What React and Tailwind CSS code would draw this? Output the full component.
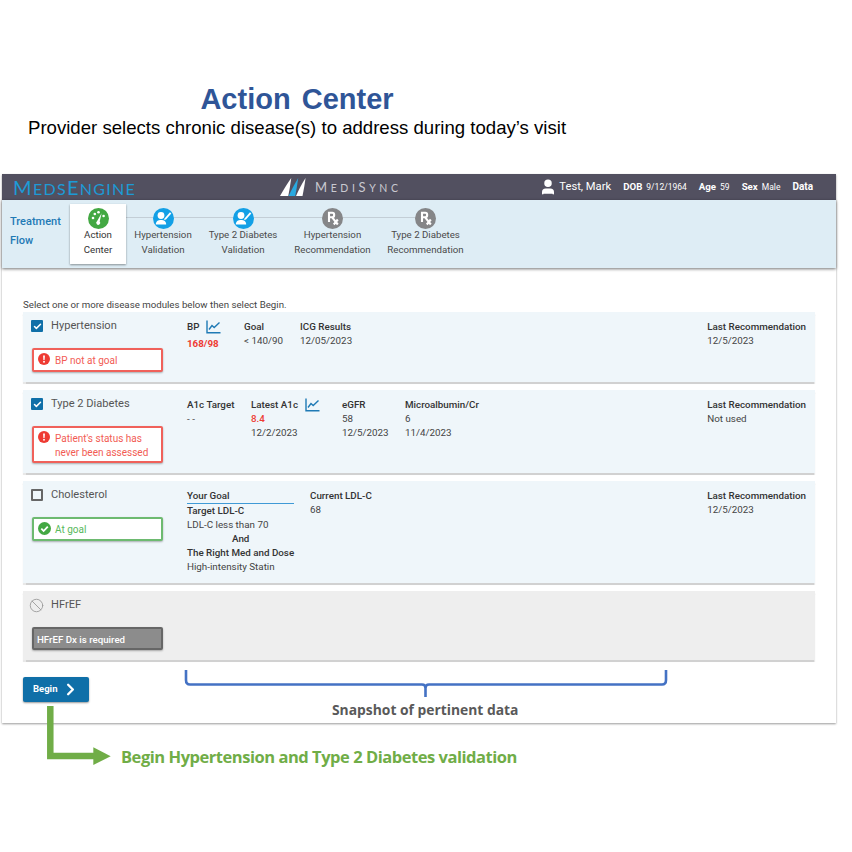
import React from 'react';
import { Check, ChevronRight, Ban, User } from 'lucide-react';

const roboto = 'font-["Roboto",sans-serif]';

const TrendIcon = () => (
  <svg width="15" height="14" viewBox="0 0 15 14" fill="none" stroke="#1f7ab5" strokeWidth="1.4" className="shrink-0">
    <path d="M1 0.5V12.800H14.500" />
    <path d="M3 9.500L6 5.500L8.200 7.500L13.500 2.500" />
  </svg>
);

const GaugeIcon = () => (
  <svg width="21" height="21" viewBox="0 0 21 21">
    <circle cx="10.500" cy="10.500" r="10.500" fill="#43a843" />
    <circle cx="5" cy="10" r="1.300" fill="#fff" />
    <circle cx="6.800" cy="6" r="1.300" fill="#fff" />
    <circle cx="10.500" cy="4.300" r="1.300" fill="#fff" />
    <circle cx="15.600" cy="8" r="1.300" fill="#fff" />
    <path d="M13.600 5.200L11.700 13.400A2 2 0 1 1 9 13.200Z" fill="#fff" />
  </svg>
);

const ValidationIcon = () => (
  <svg width="21" height="21" viewBox="0 0 21 21">
    <circle cx="10.500" cy="10.500" r="10.500" fill="#13a0e6" />
    <circle cx="8" cy="7.500" r="3.400" fill="#fff" />
    <path d="M2.800 16.500C2.800 13.400 5 12 8 12C11 12 13.200 13.400 13.200 16.500Z" fill="#fff" />
    <path d="M11.500 10.500L17 4.300L18.300 5.500L13 11.500L11 12Z" fill="#fff" />
  </svg>
);

const RxIcon = () => (
  <svg width="21" height="21" viewBox="0 0 21 21">
    <circle cx="10.500" cy="10.500" r="10.500" fill="#858688" />
    <path d="M7 14V4.800H10.300C12.800 4.800 12.800 9.200 10.300 9.200H7M10 9.200L15.800 16.500M15.800 11.500L11.800 16.500" fill="none" stroke="#fff" strokeWidth="2.100" />
  </svg>
);

const AlertIcon = () => (
  <svg width="12" height="12" viewBox="0 0 12 12" className="ml-[4px] mr-[5px] -mt-[1px] shrink-0">
    <circle cx="6" cy="6" r="6" fill="#ee3b33" />
    <path d="M5.100 2.400H6.900L6.600 7H5.400Z" fill="#fff" />
    <circle cx="6" cy="8.800" r="0.950" fill="#fff" />
  </svg>
);

const OkIcon = () => (
  <svg width="13" height="13" viewBox="0 0 13 13" className="ml-[4px] mr-[4px] -mt-[1px] shrink-0">
    <circle cx="6.500" cy="6.500" r="6.500" fill="#43a843" />
    <path d="M3.300 6.700L5.600 9L9.800 4.600" fill="none" stroke="#fff" strokeWidth="1.800" />
  </svg>
);

const Logo = () => (
  <svg width="26" height="18" viewBox="0 0 30 18" preserveAspectRatio="none" className="shrink-0">
    <path d="M0 18C4 12 8 6 13 0C12 6 11 12 9.500 18Z" fill="#fff" />
    <path d="M10 18C13 12 17 6 21 0C20 6 19 12 17.500 18Z" fill="#29a9e0" />
    <path d="M18.500 18C21.500 12 25 6 29.500 0C28.500 6 27.500 12 26 18Z" fill="#fff" />
  </svg>
);

const Step = ({ icon, lines, width, active }) => (
  <div className={`relative flex flex-col items-center pt-[4px] h-[60px] ${width} ${active ? 'bg-white shadow-[0_1px_2px_rgba(0,0,0,0.4)] text-[#333]' : 'text-[#4a4a4a]'}`}>
    <div className="relative z-10">{icon}</div>
    <div className="-mt-[2px] text-[9.7px] leading-[15px] text-center whitespace-nowrap">
      <div>{lines[0]}</div>
      <div>{lines[1]}</div>
    </div>
  </div>
);

const Checkbox = ({ checked }) => checked ? (
  <div className="w-[12px] h-[12px] rounded-[1px] bg-[#0f6fa8] flex items-center justify-center">
    <Check size={9} color="#fff" strokeWidth={4} />
  </div>
) : (
  <div className="w-[12px] h-[12px] rounded-[1px] border-2 border-[#666]" />
);

const Status = ({ tone, children, height }) => {
  const tones = {
    red: 'border-[#f0615a] text-[#f25c54] bg-white',
    green: 'border-[#6dba70] text-[#57b85c] bg-white',
    gray: 'border-[#666] text-white bg-[#8c8c8c]',
  };
  return (
    <div className={`w-[131px] ${height} ml-[1px] mt-[15px] border-2 rounded-[2px] shadow-[0_1px_2px_rgba(0,0,0,0.3)] flex items-start pt-[4px] text-[10px] leading-[14px] ${tones[tone]}`}>
      {tone === 'red' && <AlertIcon />}
      {tone === 'green' && <OkIcon />}
      <span className={tone === 'gray' ? 'ml-[3px] text-[9.7px] font-medium' : ''}>{children}</span>
    </div>
  );
};

const Field = ({ label, icon, className, children }) => (
  <div className={`shrink-0 text-[9.8px] leading-[14px] text-[#444] ${className}`}>
    <div className="font-medium text-[#333] flex items-start gap-[7px] h-[14px] whitespace-nowrap">{label}{icon && <TrendIcon />}</div>
    {children}
  </div>
);

const Card = ({ title, check, status, height, gray, last, children }) => (
  <div className={`flex ${height} mb-[8px] pl-[8px] pr-[9px] pt-[7px] shadow-[0_1.5px_1px_rgba(0,0,0,0.18)] ${gray ? 'bg-[#eeeeee]' : 'bg-[#eff6fa]'}`}>
    <div className="w-[156px] shrink-0">
      <div className="flex items-center gap-[8px] h-[14px] text-[11.1px] text-[#555]">
        {check}
        <span>{title}</span>
      </div>
      {status}
    </div>
    <div className="flex flex-1 pt-[1px]">{children}</div>
    {last && (
      <Field label="Last Recommendation" className="pt-[1px]">
        <div>{last}</div>
      </Field>
    )}
  </div>
);

export default function App() {
  return (
    <div className="relative w-[852px] h-[852px] bg-white overflow-hidden">
      {/* slide heading */}
      <div className='h-[174px] pt-[82px] font-["Liberation_Sans",sans-serif]'>
        <h1 className="text-center pr-[258px] text-[29px] leading-[34px] font-bold text-[#2f5597] [word-spacing:3px]">Action Center</h1>
        <p className="pl-[28px] text-[18.6px] leading-[24px] text-black">Provider selects chronic disease(s) to address during today’s visit</p>
      </div>

      {/* app frame */}
      <div className={`ml-[2px] w-[834px] h-[549px] shadow-[0_1px_2px_rgba(0,0,0,0.4)] ${roboto}`}>
        <div className="h-[26px] bg-[#525060] flex items-center text-white">
          <div className='w-[278px] pl-[11px] font-["Lato",sans-serif] text-[#1d9ad6] text-[20px] leading-none tracking-[1.3px]'>
            M<span className="text-[16px]">EDS</span>E<span className="text-[16px]">NGINE</span>
          </div>
          <Logo />
          <div className='ml-[9px] font-["Lato",sans-serif] text-[#c9c9d0] text-[13px] tracking-[3.6px] leading-none'>
            M<span className="text-[10.5px]">EDI</span>S<span className="text-[10.5px]">YNC</span>
          </div>
          <div className="ml-auto flex items-center pr-[23px]">
            <User size={18} fill="#fff" color="#fff" />
            <span className="ml-[2px] text-[11.2px] mr-[12px]">Test, Mark</span>
            <div className="flex items-baseline">
              <span className="text-[9.7px] font-bold">DOB</span>
              <span className="text-[8.5px] ml-[4px] mr-[12px]">9/12/1964</span>
              <span className="text-[9.7px] font-bold">Age</span>
              <span className="text-[8.5px] ml-[4px] mr-[12px]">59</span>
              <span className="text-[9.7px] font-bold">Sex</span>
              <span className="text-[8.5px] ml-[4px] mr-[12px]">Male</span>
              <span className="text-[10px] font-bold">Data</span>
            </div>
          </div>
        </div>

        <div className="relative h-[68px] bg-[#deedf5] shadow-[0_1px_3px_rgba(0,0,0,0.55)] flex items-start pt-[4px]">
          <div className="w-[68px] pl-[8px] pt-[8px] text-[11px] leading-[19px] font-medium text-[#1f7ab5]">
            Treatment<br />Flow
          </div>
          <div className="absolute left-[110px] top-[17px] w-[305px] h-px bg-[#c3ced6]" />
          <Step active width="w-[56px]" icon={<GaugeIcon />} lines={['Action', 'Center']} />
          <Step width="w-[74px]" icon={<ValidationIcon />} lines={['Hypertension', 'Validation']} />
          <Step width="w-[86px]" icon={<ValidationIcon />} lines={['Type 2 Diabetes', 'Validation']} />
          <Step width="w-[93px]" icon={<RxIcon />} lines={['Hypertension', 'Recommendation']} />
          <Step width="w-[93px]" icon={<RxIcon />} lines={['Type 2 Diabetes', 'Recommendation']} />
        </div>

        <div className="pl-[21px] pr-[21px] pt-[30px]">
          <p className="text-[9.7px] leading-[13px] mb-[1px] text-[#444]">Select one or more disease modules below then select Begin.</p>

          <Card height="h-[70px]" title="Hypertension" check={<Checkbox checked />} last="12/5/2023"
            status={<Status tone="red" height="h-[24px]">BP not at goal</Status>}>
            <Field label="BP" icon className="w-[57px]">
              <div className="font-bold text-[#ee3b33] mt-[3px]">168/98</div>
            </Field>
            <Field label="Goal" className="w-[56px]"><div>&lt; 140/90</div></Field>
            <Field label="ICG Results" className="w-[80px]"><div>12/05/2023</div></Field>
          </Card>

          <Card height="h-[83px]" title="Type 2 Diabetes" check={<Checkbox checked />} last="Not used"
            status={<Status tone="red" height="h-[37px]">Patient's status has<br />never been assessed</Status>}>
            <Field label="A1c Target" className="w-[64px]"><div>- -</div></Field>
            <Field label="Latest A1c" icon className="w-[91px]">
              <div className="font-medium text-[#ee3b33]">8.4</div>
              <div>12/2/2023</div>
            </Field>
            <Field label="eGFR" className="w-[63px]">
              <div>58</div>
              <div>12/5/2023</div>
            </Field>
            <Field label="Microalbumin/Cr" className="w-[90px]">
              <div>6</div>
              <div>11/4/2023</div>
            </Field>
          </Card>

          <Card height="h-[102px]" title="Cholesterol" check={<Checkbox />} last="12/5/2023"
            status={<Status tone="green" height="h-[24px]">At goal</Status>}>
            <div className="w-[107px] mr-[16px] shrink-0 text-[9.8px] leading-[14px] text-[#444]">
              <div className="font-medium text-[#333] border-b border-[#3f9ad6]">Your Goal</div>
              <div className="font-medium text-[#333]">Target LDL-C</div>
              <div>LDL-C less than 70</div>
              <div className="font-medium text-[#333] pl-[45px]">And</div>
              <div className="font-medium text-[#333] whitespace-nowrap">The Right Med and Dose</div>
              <div>High-intensity Statin</div>
            </div>
            <Field label="Current LDL-C" className="w-[80px]"><div>68</div></Field>
          </Card>

          <Card gray height="h-[69px]" title="HFrEF" check={<Ban size={15} color="#999" strokeWidth={1.4} className="-ml-[2px] -mr-[1px]" />}
            status={<Status tone="gray" height="h-[23px]">HFrEF Dx is required</Status>} />

          <button className="mt-[17px] w-[66px] h-[25px] rounded-[2px] bg-[#0f6fa8] shadow-[0_1px_2px_rgba(0,0,0,0.4)] text-white text-[9.5px] font-bold flex items-center pl-[10px] gap-[4px]">
            Begin
            <ChevronRight size={19} strokeWidth={3} />
          </button>
        </div>
      </div>

      {/* slide annotations over the screenshot */}
      <svg width="852" height="852" viewBox="0 0 852 852" className="absolute left-0 top-0 pointer-events-none" fill="none">
        <path d="M186 670V680Q186 684.500 190 684.500H422Q425.500 684.500 425.500 688V697M425.500 688Q425.500 684.500 429 684.500H662Q666 684.500 666 680V670" stroke="#4472c4" strokeWidth="2.600" />
        <path d="M50.300 706V756H94" stroke="#70ad47" strokeWidth="6.500" />
        <path d="M93.300 747.300L110.700 756.200L93.300 765Z" fill="#70ad47" />
      </svg>
      <div className='absolute left-[332px] top-[701px] font-["Open_Sans",sans-serif] text-[13.85px] leading-[18px] font-bold text-[#595959]'>Snapshot of pertinent data</div>
      <div className='absolute left-[121px] top-[746px] font-["Open_Sans",sans-serif] text-[16.5px] leading-[22px] font-bold text-[#70ad47] tracking-[-0.47px]'>Begin Hypertension and Type 2 Diabetes validation</div>
    </div>
  );
}
